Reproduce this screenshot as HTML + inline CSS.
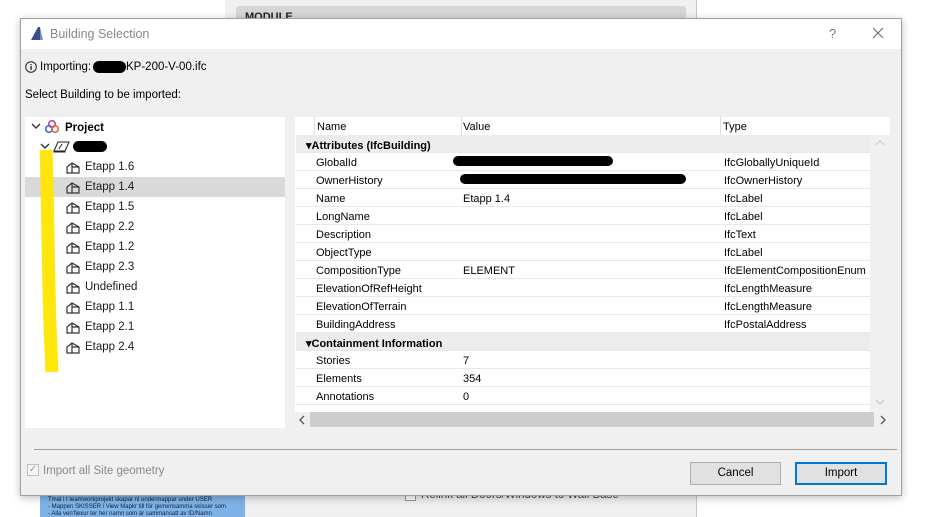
<!DOCTYPE html>
<html><head><style>
*{margin:0;padding:0;box-sizing:border-box}
body{width:943px;height:517px;overflow:hidden;background:#fff;font-family:"Liberation Sans",sans-serif;font-size:11px;color:#000;position:relative}
.a{position:absolute}
.tr{position:absolute;left:85px;font-size:11.5px;color:#1a1a1a}
.row{position:absolute;left:296px;width:574px;height:18px;background:#fff;border-bottom:1px solid #e8e8e8}
.row span{position:absolute;top:4px;font-size:11px}
.grp{background:#ececec;font-weight:bold}
</style></head><body>
<div class="a" style="left:225px;top:0;width:472px;height:517px;background:#f0f0f0;border-right:1px solid #c8c8c8"></div>
<div class="a" style="left:236px;top:6px;width:450px;height:20px;background:#d6d6d6;border-radius:3px"></div>
<div class="a" style="left:245px;top:11px;font-weight:bold;font-size:11px;color:#222">MODULE</div>
<div class="a" style="left:40px;top:496px;width:205px;height:21px;background:#7fb3e8;font-size:6px;line-height:7px;color:#123;padding:1px 8px;overflow:hidden">Tmai i t teamworkprojekt skapar ni undermappar under USER<br>- Mappen SKISSER i View Mapkr till för gemensamma skisser som<br>- Alla ven'fiexur ter her namn som är sammansatt av ID/Namn</div>
<div class="a" style="left:405px;top:490px;width:11px;height:11px;border:1px solid #999;background:#fff"></div>
<div class="a" style="left:421px;top:489px;font-size:11.5px;color:#444">Relink all Doors/Windows to Wall Base</div>
<div class="a" style="left:20px;top:18px;width:882px;height:478px;background:#f0f0f0;border:1px solid #a0a0a0;box-shadow:0 2px 8px rgba(0,0,0,.25)"></div>
<div class="a" style="left:21px;top:19px;width:880px;height:30px;background:#fff"></div>
<svg class="a" style="left:29px;top:25px" width="16" height="16"><polygon points="2,15 9,2 11,2 11,15" fill="#3a4f8a"/><polygon points="11,2 14,15 11,15" fill="#7d8fc0"/></svg>
<div class="a" style="left:50px;top:27px;font-size:12.5px;color:#888">Building Selection</div>
<div class="a" style="left:829px;top:26px;font-size:13px;color:#777">?</div>
<svg class="a" style="left:872px;top:27px" width="12" height="12"><path d="M1 1L11 11M11 1L1 11" stroke="#666" stroke-width="1"/></svg>
<svg class="a" style="left:25px;top:61px" width="12" height="12"><circle cx="6" cy="6" r="5.3" fill="none" stroke="#222"/><rect x="5.4" y="5" width="1.3" height="4" fill="#222"/><rect x="5.4" y="3" width="1.3" height="1.2" fill="#222"/></svg>
<div class="a" style="left:40px;top:61px;font-size:11.5px">Importing:</div>
<div class="a" style="left:93px;top:61px;width:33px;height:12px;background:#000;border-radius:6px"></div>
<div class="a" style="left:126px;top:61px;font-size:11.5px">KP-200-V-00.ifc</div>
<div class="a" style="left:25px;top:89px;font-size:11.5px">Select Building to be imported:</div>
<div class="a" style="left:25px;top:117px;width:260px;height:311px;background:#fff"></div>
<svg class="a" style="left:31px;top:123px" width="10" height="8"><path d="M1 1L5 5L9 1" fill="none" stroke="#333" stroke-width="1.4"/></svg>
<svg class="a" style="left:45px;top:120px" width="14" height="14"><circle cx="7" cy="4" r="3.3" fill="none" stroke="#d0409a" stroke-width="1.6"/><circle cx="4" cy="9" r="3.3" fill="none" stroke="#3a6fd8" stroke-width="1.6"/><circle cx="10" cy="9" r="3.3" fill="none" stroke="#e06a3a" stroke-width="1.6"/></svg>
<div class="a" style="left:65px;top:122px;font-weight:bold;font-size:11.5px">Project</div>
<svg class="a" style="left:40px;top:143px" width="10" height="8"><path d="M1 1L5 5L9 1" fill="none" stroke="#333" stroke-width="1.4"/></svg>
<svg class="a" style="left:53px;top:140px" width="17" height="13"><path d="M1 11L5 2H16L12 11Z M1 11V12H12V11 M12 11L16 2" fill="none" stroke="#222"/><path d="M6 9L9 4" stroke="#222"/></svg>
<div class="a" style="left:73px;top:141px;width:34px;height:11px;background:#000;border-radius:6px"></div>
<div class="a" style="left:25px;top:177px;width:260px;height:20px;background:#d9d9d9"></div>
<div class="tr" style="top:161px">Etapp 1.6</div>
<div class="tr" style="top:181px">Etapp 1.4</div>
<div class="tr" style="top:201px">Etapp 1.5</div>
<div class="tr" style="top:221px">Etapp 2.2</div>
<div class="tr" style="top:241px">Etapp 1.2</div>
<div class="tr" style="top:261px">Etapp 2.3</div>
<div class="tr" style="top:281px">Undefined</div>
<div class="tr" style="top:301px">Etapp 1.1</div>
<div class="tr" style="top:321px">Etapp 2.1</div>
<div class="tr" style="top:341px">Etapp 2.4</div>
<svg class="a" style="left:66px;top:160px" width="14" height="200">
<defs><g id="h"><path d="M1 11V5L6 1L13 5V11H1Z M6 1V11 M6 5H13" fill="none" stroke="#333" stroke-width="1.2"/></g></defs>
<use href="#h" y="2"/><use href="#h" y="22"/><use href="#h" y="42"/><use href="#h" y="62"/><use href="#h" y="82"/><use href="#h" y="102"/><use href="#h" y="122"/><use href="#h" y="142"/><use href="#h" y="162"/><use href="#h" y="182"/>
</svg>
<svg class="a" style="left:38px;top:146px" width="28" height="232"><path d="M8 4 C10 60 10 120 12 180 L14 226" stroke="#ffe600" stroke-width="13" fill="none" stroke-linecap="butt" opacity=".95"/></svg>
<div class="a" style="left:295px;top:117px;width:595px;height:311px;background:#fff"></div>
<div class="a" style="left:870px;top:135px;width:20px;height:277px;background:#f0f0f0"></div>
<div class="a" style="left:314px;top:117px;width:1px;height:18px;background:#e0e0e0"></div>
<div class="a" style="left:461px;top:117px;width:1px;height:18px;background:#e0e0e0"></div>
<div class="a" style="left:720px;top:117px;width:1px;height:18px;background:#e0e0e0"></div>
<div class="a" style="left:317px;top:121px">Name</div>
<div class="a" style="left:463px;top:121px">Value</div>
<div class="a" style="left:723px;top:121px">Type</div>
<div class="row grp" style="top:135px"><span style="left:10px">▾Attributes (IfcBuilding)</span></div>
<div class="row" style="top:153px"><span style="left:20px">GlobalId</span><span style="left:428px">IfcGloballyUniqueId</span></div>
<div class="a" style="left:453px;top:156px;width:160px;height:10px;background:#000;border-radius:5px"></div>
<div class="row" style="top:171px"><span style="left:20px">OwnerHistory</span><span style="left:428px">IfcOwnerHistory</span></div>
<div class="a" style="left:460px;top:174px;width:226px;height:10px;background:#000;border-radius:5px"></div>
<div class="row" style="top:189px"><span style="left:20px">Name</span><span style="left:167px">Etapp 1.4</span><span style="left:428px">IfcLabel</span></div>
<div class="row" style="top:207px"><span style="left:20px">LongName</span><span style="left:428px">IfcLabel</span></div>
<div class="row" style="top:225px"><span style="left:20px">Description</span><span style="left:428px">IfcText</span></div>
<div class="row" style="top:243px"><span style="left:20px">ObjectType</span><span style="left:428px">IfcLabel</span></div>
<div class="row" style="top:261px"><span style="left:20px">CompositionType</span><span style="left:167px">ELEMENT</span><span style="left:428px;white-space:nowrap;width:146px;overflow:hidden">IfcElementCompositionEnum</span></div>
<div class="row" style="top:279px"><span style="left:20px">ElevationOfRefHeight</span><span style="left:428px">IfcLengthMeasure</span></div>
<div class="row" style="top:297px"><span style="left:20px">ElevationOfTerrain</span><span style="left:428px">IfcLengthMeasure</span></div>
<div class="row" style="top:315px"><span style="left:20px">BuildingAddress</span><span style="left:428px">IfcPostalAddress</span></div>
<div class="row grp" style="top:333px"><span style="left:10px">▾Containment Information</span></div>
<div class="row" style="top:351px"><span style="left:20px">Stories</span><span style="left:167px">7</span></div>
<div class="row" style="top:369px"><span style="left:20px">Elements</span><span style="left:167px">354</span></div>
<div class="row" style="top:387px"><span style="left:20px">Annotations</span><span style="left:167px">0</span></div>
<svg class="a" style="left:875px;top:139px" width="10" height="8"><path d="M1 6L5 2L9 6" fill="none" stroke="#ccc" stroke-width="1.2"/></svg>
<svg class="a" style="left:875px;top:398px" width="10" height="8"><path d="M1 2L5 6L9 2" fill="none" stroke="#ccc" stroke-width="1.2"/></svg>
<div class="a" style="left:295px;top:412px;width:595px;height:16px;background:#f0f0f0"></div>
<div class="a" style="left:310px;top:412px;width:564px;height:15px;background:#cdcdcd"></div>
<svg class="a" style="left:298px;top:415px" width="8" height="10"><path d="M6 1L2 5L6 9" fill="none" stroke="#555" stroke-width="1.3"/></svg>
<svg class="a" style="left:879px;top:415px" width="8" height="10"><path d="M2 1L6 5L2 9" fill="none" stroke="#555" stroke-width="1.3"/></svg>
<div class="a" style="left:34px;top:449px;width:863px;height:1px;background:#a0a0a0"></div>
<div class="a" style="left:27px;top:464px;width:12px;height:12px;border:1px solid #c0c0c0;background:#f5f5f5;font-size:10px;color:#999;line-height:10px;text-align:center">✓</div>
<div class="a" style="left:43px;top:465px;font-size:11.5px;color:#888">Import all Site geometry</div>
<div class="a" style="left:690px;top:462px;width:91px;height:23px;background:#e1e1e1;border:1px solid #adadad;text-align:center;line-height:21px;font-size:11.5px">Cancel</div>
<div class="a" style="left:795px;top:462px;width:92px;height:23px;background:#e1e1e1;border:2px solid #0078d7;text-align:center;line-height:19px;font-size:11.5px">Import</div>
</body></html>
